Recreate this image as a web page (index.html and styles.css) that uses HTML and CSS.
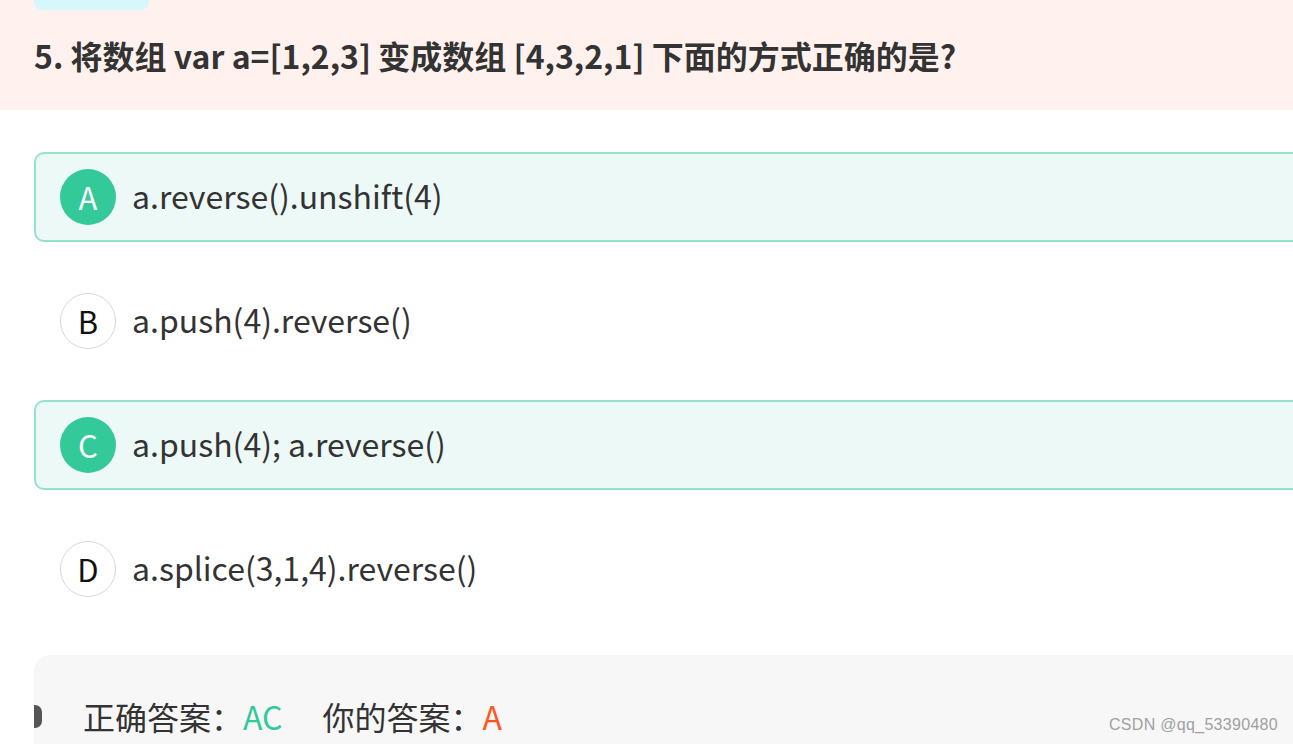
FILE: index.html
```html
<!DOCTYPE html>
<html lang="zh-CN">
<head>
<meta charset="utf-8">
<link rel="stylesheet" href="styles.css">
</head>
<body>
<div class="page">
  <div class="header">
    <div class="tag">单选题</div>
    <div class="title">5. 将数组 var a=[1,2,3] 变成数组 [4,3,2,1] 下面的方式正确的是?</div>
  </div>
  <div class="options">
    <div class="option selected"><span class="badge on">A</span><span class="otext">a.reverse().unshift(4)</span></div>
    <div class="option"><span class="badge off">B</span><span class="otext">a.push(4).reverse()</span></div>
    <div class="option selected"><span class="badge on">C</span><span class="otext">a.push(4); a.reverse()</span></div>
    <div class="option"><span class="badge off">D</span><span class="otext">a.splice(3,1,4).reverse()</span></div>
  </div>
  <div class="answer">
    <span class="marker"></span>
    <div class="aline"><span class="label">正确答案：</span><span class="correct">AC</span><span class="label mine">你的答案：</span><span class="wrong">A</span></div>
  </div>
  <div class="watermark">CSDN @qq_53390480</div>
</div>
</body>
</html>
```
FILE: styles.css
```css
html, body {
  margin: 0;
  padding: 0;
  background: #ffffff;
}
body {
  width: 1293px;
  height: 744px;
  overflow: hidden;
  font-family: "Noto Sans CJK SC", "Noto Sans", sans-serif;
  color: #333333;
}
.page {
  position: relative;
  width: 1293px;
  height: 744px;
  overflow: hidden;
}
.header {
  background: #fff2ee;
  height: 110px;
  padding-left: 34px;
  box-sizing: border-box;
  overflow: hidden;
}
.tag {
  width: 115px;
  height: 40px;
  margin-top: -30px;
  background: #d6f7fc;
  border-radius: 8px;
  color: #12b5d6;
  font-size: 22px;
  line-height: 34px;
  text-align: center;
  box-sizing: border-box;
}
.title {
  margin-top: 25px;
  font-size: 32px;
  line-height: 40px;
  font-weight: 700;
  color: #333333;
  white-space: nowrap;
}
.options {
  margin-top: 42px;
  padding-left: 34px;
  padding-bottom: 1px;
}
.option {
  width: 1320px;
  height: 90px;
  box-sizing: border-box;
  border: 2px solid transparent;
  border-radius: 10px;
  display: flex;
  align-items: center;
  padding-left: 24px;
  margin-bottom: 34px;
}
.option.selected {
  border-color: #94e2c8;
  background: #edf9f6;
}
.badge {
  width: 56px;
  height: 56px;
  box-sizing: border-box;
  border-radius: 50%;
  display: flex;
  align-items: center;
  justify-content: center;
  font-size: 31px;
  margin-right: 16px;
  flex: none;
  padding-bottom: 2px;
}
.badge.on {
  background: #33c998;
  color: #ffffff;
}
.badge.off {
  border: 1px solid #d8d8d8;
  background: #ffffff;
  color: #111111;
}
.otext {
  font-size: 32px;
  line-height: 40px;
  padding-bottom: 4px;
  color: #333333;
  white-space: nowrap;
}
.answer {
  position: relative;
  margin-top: 6px;
  margin-left: 34px;
  width: 1300px;
  height: 120px;
  background: #f7f7f7;
  border-top-left-radius: 16px;
  padding-top: 41px;
  padding-left: 49px;
  box-sizing: border-box;
}
.marker {
  position: absolute;
  left: 0;
  top: 50px;
  width: 8px;
  height: 23px;
  background: #555555;
  border-radius: 0 7px 7px 0;
}
.aline {
  font-size: 32px;
  line-height: 40px;
  white-space: nowrap;
}
.label {
  color: #333333;
}
.correct {
  color: #33c998;
}
.mine {
  margin-left: 40px;
}
.wrong {
  color: #ff5722;
}
.watermark {
  position: absolute;
  right: 15px;
  bottom: 10px;
  font-family: "Liberation Sans", Arial, sans-serif;
  font-size: 16px;
  color: #a0a0a0;
  letter-spacing: 0.3px;
}
```
